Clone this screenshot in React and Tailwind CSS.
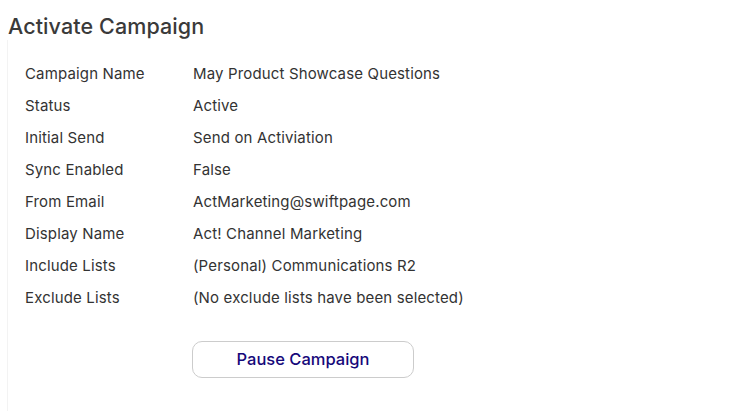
import React from "react";

const rows = [
  ["Campaign Name", "May Product Showcase Questions"],
  ["Status", "Active"],
  ["Initial Send", "Send on Activiation"],
  ["Sync Enabled", "False"],
  ["From Email", "ActMarketing@swiftpage.com"],
  ["Display Name", "Act! Channel Marketing"],
  ["Include Lists", "(Personal) Communications R2"],
  ["Exclude Lists", "(No exclude lists have been selected)"],
];

export default function App() {
  return (
    <div className="w-[754px] h-[411px] bg-white text-[#333333] overflow-hidden" style={{ fontFamily: "Inter, 'Noto Sans', sans-serif" }}>
      <h1 className="pl-[8px] pt-[12px] text-[21.5px] leading-[28px] font-medium text-[#3a3a3a] tracking-[0.1px]">Activate Campaign</h1>
      <div className="ml-[7px] border-l border-[#f3f3f3] h-full">
        <div className="pl-[17px] pt-[18px] flex flex-col">
          {rows.map(([k, v]) => (
            <div key={k} className="flex h-[32px] items-center text-[15px] tracking-[0.15px]">
              <div className="w-[168px]">{k}</div>
              <div>{v}</div>
            </div>
          ))}
        </div>
        <div className="pl-[184px] pt-[27px]">
          <button className="w-[222px] h-[37px] rounded-[10px] border border-[#cccccc] bg-white text-[16.5px] font-medium text-[#16087a]">
            Pause Campaign
          </button>
        </div>
      </div>
    </div>
  );
}
